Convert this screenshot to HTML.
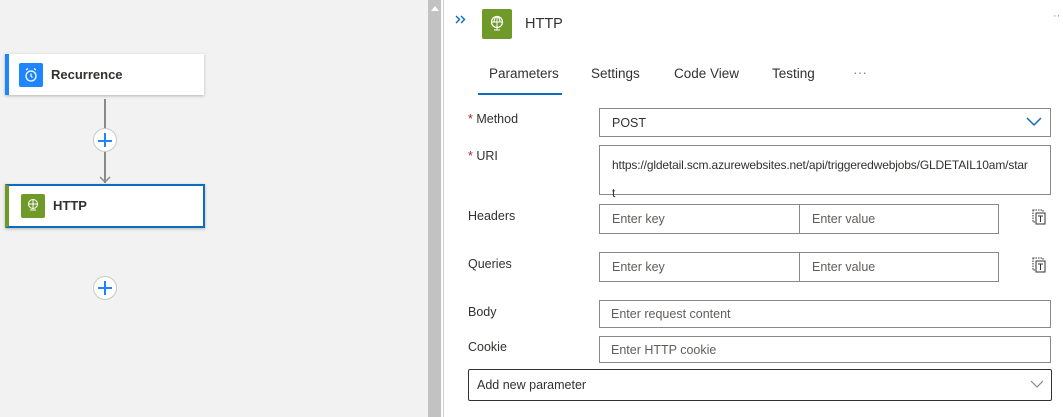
<!DOCTYPE html>
<html><head><style>
*{box-sizing:border-box;margin:0;padding:0}
body{width:1063px;height:417px;overflow:hidden;font-family:"Segoe UI","Liberation Sans",sans-serif;position:relative;background:#fff;color:#323130}
.a{position:absolute}
.canvas{left:0;top:0;width:428px;height:417px;background:#f2f2f2}
.card{background:#fff;box-shadow:0 1px 3px rgba(0,0,0,.25)}
.lbl{font-size:12.5px;color:#323130}
.inp{border:1px solid #8a8886;background:#fff;font-size:12.5px;color:#605e5c;padding-left:12px;display:flex;align-items:center}
.req{color:#a4262c}
.tab{font-size:13.5px;color:#323130;top:66px}
</style></head><body>
<div class="a canvas"></div>
<div class="a" style="left:428px;top:0;width:13px;height:417px;background:#c2c2c2"></div>
<div class="a" style="left:431px;top:6px;width:0;height:0;border-left:4px solid transparent;border-right:4px solid transparent;border-bottom:5px solid #fff"></div>
<div class="a" style="left:443px;top:0;width:1px;height:417px;background:#d0d0d0"></div>

<div class="a card" style="left:5px;top:54px;width:199px;height:41px;border-left:4px solid #1f85ff"></div>
<div class="a" style="left:19px;top:63px;width:24px;height:24px;background:#1f85ff;border-radius:2px"></div>
<svg class="a" style="left:24px;top:67px" width="14" height="16" viewBox="0 0 14 16"><circle cx="7" cy="9" r="5" fill="none" stroke="#fff" stroke-width="1.3"/><path d="M7 6.5V9l1.5 1.5M2 3l2-1.5M12 3l-2-1.5" stroke="#fff" stroke-width="1.2" fill="none"/></svg>
<div class="a" style="left:51px;top:67px;font-size:13px;font-weight:bold;color:#323130">Recurrence</div>

<div class="a" style="left:104px;top:99px;width:2px;height:30px;background:#8a8a8a"></div>
<div class="a" style="left:93px;top:128px;width:24px;height:24px;border-radius:50%;background:#fff;border:1px solid #c8c8c8"></div>
<div class="a" style="left:98px;top:139.5px;width:14px;height:2px;background:#1f85ff"></div>
<div class="a" style="left:104px;top:133px;width:2px;height:14px;background:#1f85ff"></div>
<div class="a" style="left:104px;top:152px;width:2px;height:31px;background:#8a8a8a"></div>
<svg class="a" style="left:99px;top:176px" width="12" height="8"><path d="M1 1l5 5 5-5" stroke="#8a8a8a" stroke-width="1.5" fill="none"/></svg>

<div class="a card" style="left:5px;top:184px;width:200px;height:44px;border:2px solid #0f6cbd;border-left:4px solid #6f9a2a"></div>
<div class="a" style="left:21px;top:194px;width:24px;height:24px;background:#6f9a2a;border-radius:2px"></div>
<svg class="a" style="left:27px;top:198px" width="12" height="16" viewBox="0 0 12 16"><circle cx="6" cy="6" r="4.5" fill="none" stroke="#fff" stroke-width="1"/><path d="M1.5 6h9M6 1.5v9M3 12h6" stroke="#fff" stroke-width="1" fill="none"/></svg>
<div class="a" style="left:53px;top:198px;font-size:13px;font-weight:bold;color:#323130">HTTP</div>

<div class="a" style="left:93px;top:276px;width:24px;height:24px;border-radius:50%;background:#fff;border:1px solid #c8c8c8"></div>
<div class="a" style="left:98px;top:287px;width:14px;height:2px;background:#1f85ff"></div>
<div class="a" style="left:104px;top:281px;width:2px;height:14px;background:#1f85ff"></div>

<svg class="a" style="left:455px;top:15px" width="12" height="9"><path d="M1 1l3.5 3.5L1 8M6 1l3.5 3.5L6 8" stroke="#0f6cbd" stroke-width="1.4" fill="none"/></svg>
<div class="a" style="left:482px;top:9px;width:30px;height:30px;background:#6f9a2a;border-radius:2px"></div>
<svg class="a" style="left:489px;top:14px" width="16" height="20" viewBox="0 0 16 20"><circle cx="8" cy="8" r="5.5" fill="none" stroke="#fff" stroke-width="1.2"/><path d="M2.5 8h11M8 2.5v11M5 8c0-3 1.5-5 3-5.5M11 8c0-3-1.5-5-3-5.5M8 13.5v2M5 16h6" stroke="#fff" stroke-width="1" fill="none"/></svg>
<div class="a" style="left:525px;top:16px;font-size:14.5px;color:#323130">HTTP</div>
<div class="a" style="left:1053px;top:10px;font-size:11px;color:#8a8886">··</div>

<div class="a tab" style="left:489px">Parameters</div>
<div class="a tab" style="left:591px">Settings</div>
<div class="a tab" style="left:674px">Code View</div>
<div class="a tab" style="left:772px">Testing</div>
<div class="a" style="left:853px;top:64px;font-size:14px;color:#8a8886">···</div>
<div class="a" style="left:478px;top:93px;width:84px;height:2px;background:#0f6cbd"></div>

<div class="a lbl" style="left:468px;top:112px"><span class="req">* </span>Method</div>
<div class="a inp" style="left:599px;top:108px;width:452px;height:29px;color:#323130">POST</div>
<svg class="a" style="left:1026px;top:117px" width="16" height="10"><path d="M1 1l7 7 7-7" stroke="#0f6cbd" stroke-width="1.5" fill="none"/></svg>

<div class="a lbl" style="left:468px;top:149px"><span class="req">* </span>URI</div>
<div class="a" style="left:599px;top:145px;width:452px;height:50px;border:1px solid #8a8886;font-size:12px;letter-spacing:-0.15px;color:#323130;padding:5px 0 0 12px;line-height:28px;white-space:nowrap">https://gldetail.scm.azurewebsites.net/api/triggeredwebjobs/GLDETAIL10am/star<br>t</div>

<div class="a lbl" style="left:468px;top:209px">Headers</div>
<div class="a inp" style="left:599px;top:204px;width:201px;height:30px">Enter key</div>
<div class="a inp" style="left:799px;top:204px;width:200px;height:30px">Enter value</div>
<svg class="a" style="left:1032px;top:209px" width="14" height="16" viewBox="0 0 14 16"><rect x="1" y="1" width="10" height="12" fill="none" stroke="#323130" stroke-dasharray="1.5 1"/><rect x="4" y="4" width="9" height="11" fill="#fff" stroke="#323130"/><path d="M6 7h5M8.5 7v6" stroke="#323130"/></svg>

<div class="a lbl" style="left:468px;top:257px">Queries</div>
<div class="a inp" style="left:599px;top:252px;width:201px;height:30px">Enter key</div>
<div class="a inp" style="left:799px;top:252px;width:200px;height:30px">Enter value</div>
<svg class="a" style="left:1032px;top:257px" width="14" height="16" viewBox="0 0 14 16"><rect x="1" y="1" width="10" height="12" fill="none" stroke="#323130" stroke-dasharray="1.5 1"/><rect x="4" y="4" width="9" height="11" fill="#fff" stroke="#323130"/><path d="M6 7h5M8.5 7v6" stroke="#323130"/></svg>

<div class="a lbl" style="left:468px;top:305px">Body</div>
<div class="a inp" style="left:599px;top:300px;width:452px;height:28px;padding-left:11px">Enter request content</div>
<div class="a lbl" style="left:468px;top:340px">Cookie</div>
<div class="a inp" style="left:599px;top:336px;width:452px;height:27px;padding-left:11px">Enter HTTP cookie</div>

<div class="a" style="left:468px;top:369px;width:584px;height:32px;border:1px solid #323130;border-radius:2px;font-size:12.5px;color:#323130;padding-left:8px;display:flex;align-items:center">Add new parameter</div>
<svg class="a" style="left:1030px;top:380px" width="14" height="9"><path d="M1 1l6 6 6-6" stroke="#8a8886" stroke-width="1.2" fill="none"/></svg>
</body></html>
